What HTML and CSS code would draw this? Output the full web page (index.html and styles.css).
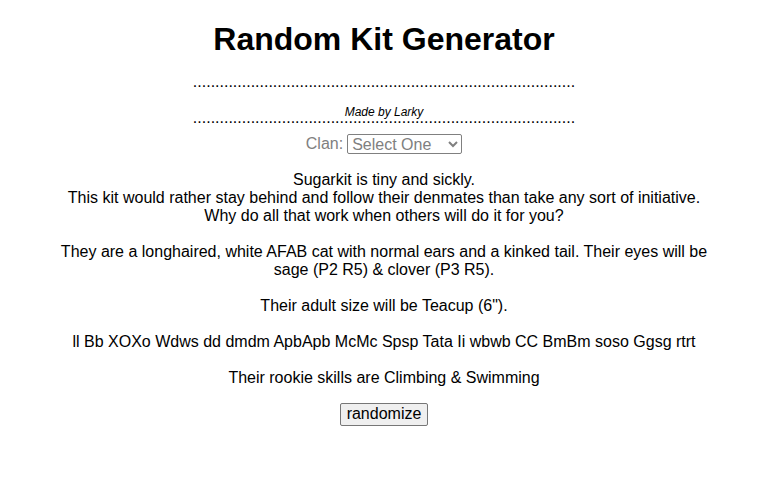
FILE: index.html
```html
<!DOCTYPE html>
<html lang="en">
<head>
  <meta charset="UTF-8">
  <title>Random Kit Generator</title>
  <link rel="stylesheet" href="styles.css">
</head>
<body>

  <h1>Random Kit Generator</h1>

  <div class="dots">......................................................................................</div>
  <div class="credit">Made by Larky</div>
  <div class="dots">......................................................................................</div>

  <div class="clan">
    <label for="clan">Clan:</label>
    <select id="clan">
      <option>Select One</option>
      <option>ThunderClan</option>
      <option>RiverClan</option>
      <option>WindClan</option>
      <option>ShadowClan</option>
    </select>
  </div>

  <div id="kit">
    <div class="block">
      Sugarkit is tiny and sickly.<br>
      This kit would rather stay behind and follow their denmates than take any sort of initiative.<br>
      Why do all that work when others will do it for you?
    </div>
    <div class="block">
      They are a longhaired, white AFAB cat with normal ears and a kinked tail. Their eyes will be sage (P2 R5) &amp; clover (P3 R5).
    </div>
    <div class="block">Their adult size will be Teacup (6").</div>
    <div class="block">ll Bb XOXo Wdws dd dmdm ApbApb McMc Spsp Tata Ii wbwb CC BmBm soso Ggsg rtrt</div>
    <div class="block">Their rookie skills are Climbing &amp; Swimming</div>
  </div>

  <button type="button">randomize</button>

</body>
</html>
```

FILE: styles.css
```css
body {
  margin: 0;
  padding: 0 60px;
  font-family: "Liberation Sans", Arial, sans-serif;
  font-size: 16px;
  line-height: 18px;
  text-align: center;
  color: #000;
  background-color: #fff;
}

h1 {
  margin: 21px 0 0;
  font-size: 32px;
  line-height: 37px;
}

.dots {
  line-height: 8px;
  white-space: nowrap;
}

.dots:first-of-type {
  margin-top: 20px;
}

.credit {
  margin-top: 24px;
  font-size: 12px;
  line-height: 4px;
  font-style: italic;
}

.clan {
  margin-top: 12px;
  display: flex;
  justify-content: center;
  align-items: center;
  gap: 4px;
  color: #808080;
}

.clan select {
  width: 115px;
  height: 20px;
  font-family: inherit;
  font-size: 16px;
  color: #808080;
  background-color: #fff;
  border: 1px solid #808080;
  border-radius: 2px;
}

#kit {
  margin-top: 17px;
}

.block + .block {
  margin-top: 18px;
}

button {
  margin-top: 16px;
  padding: 1px 6px 2px;
  font-family: inherit;
  font-size: 16px;
  color: #000;
  background-color: #efefef;
  border: 1px solid #767676;
  border-radius: 2px;
}
```
